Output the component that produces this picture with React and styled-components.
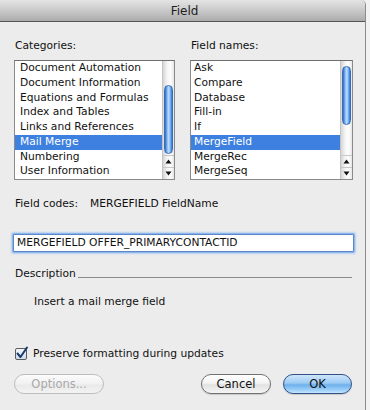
import React from 'react'
import styled, { createGlobalStyle, css } from 'styled-components'

const GlobalStyle = createGlobalStyle`
  html, body {
    margin: 0;
    padding: 0;
    background: #f2f2f2;
  }
  body {
    font-family: 'DejaVu Sans', 'Liberation Sans', sans-serif;
    font-size: 10.7px;
    color: #111;
  }
`

const Window = styled.div`
  width: 366px;
  height: 410px;
  background: #ececec;
  border-right: 1px solid #8c8c8c;
  border-top-right-radius: 5px;
  display: flex;
  flex-direction: column;
  box-sizing: border-box;
  overflow: hidden;
`

const TitleBar = styled.div`
  height: 21px;
  flex: none;
  display: flex;
  align-items: center;
  justify-content: center;
  background: linear-gradient(#e4e4e4, #c9c9c9 50%, #ababab);
  border-bottom: 1px solid #555;
  font-size: 12px;
  color: #1e1e1e;
  padding-left: 4px;
`

const Body = styled.div`
  padding: 17px 13px 0 14px;
  display: flex;
  flex-direction: column;
`

const ListsRow = styled.div`
  display: grid;
  grid-template-columns: 161px 163px;
  column-gap: 15px;
`

const Column = styled.div`
  display: flex;
  flex-direction: column;
`

const Label = styled.div`
  height: 16px;
  line-height: 14px;
  padding-left: 1px;
  margin-bottom: 5px;
`

const ListBox = styled.div`
  height: 120px;
  box-sizing: border-box;
  border: 1px solid #8a8a8a;
  border-top-color: #6f6f6f;
  background: #fff;
  display: flex;
`

const Items = styled.ul`
  list-style: none;
  margin: 0;
  padding: 0;
  flex: 1;
  overflow: hidden;
`

const Item = styled.li`
  height: 14.75px;
  line-height: 14.75px;
  padding-left: ${(p) => p.$indent}px;
  white-space: nowrap;
  ${(p) =>
    p.$selected &&
    css`
      background: #3d80df;
      color: #fff;
    `}
`

const ScrollBar = styled.div`
  width: 11px;
  flex: none;
  display: flex;
  flex-direction: column;
  background: linear-gradient(90deg, #d6d6d6, #f6f6f6 40%, #fdfdfd 70%, #e6e6e6);
  border-left: 1px solid #c4c4c4;
`

const Track = styled.div`
  flex: 1;
  position: relative;
`

const Thumb = styled.div`
  position: absolute;
  left: 1px;
  right: 1px;
  border-radius: 5px;
  background: linear-gradient(90deg, #2d69c6, #8fc0f5 35%, #bfe0ff 55%, #5d9ee8 85%, #2f6fd0);
  border: 1px solid #3a6cb8;
  box-sizing: border-box;
`

const ArrowButton = styled.div`
  height: 11px;
  border-top: 1px solid #c8c8c8;
  display: flex;
  align-items: center;
  justify-content: center;
`

const FieldCodesRow = styled.div`
  display: flex;
  gap: 12px;
  margin-top: 17px;
  padding-left: 1px;
  line-height: 14px;
`

const CodeInput = styled.div`
  margin-top: 23px;
  margin-left: -1px;
  width: 341px;
  height: 18px;
  box-sizing: border-box;
  background: #fff;
  border: 1px solid #5a88c8;
  box-shadow: 0 0 0 1px #8fb6ea, 0 0 2px 2px #b6d0f0;
  border-radius: 1px;
  padding-left: 3px;
  line-height: 16px;
  white-space: nowrap;
`

const SectionHeader = styled.div`
  margin-top: 15px;
  display: flex;
  align-items: center;
  gap: 2px;
  padding-left: 1px;
  line-height: 14px;
`

const Rule = styled.div`
  flex: 1;
  height: 1px;
  background: #8a8a8a;
  margin-top: 7px;
`

const DescriptionText = styled.div`
  margin-top: 14px;
  padding-left: 20px;
  line-height: 14px;
`

const CheckRow = styled.label`
  margin-top: 38px;
  display: flex;
  align-items: center;
  gap: 6px;
  padding-left: 1px;
  line-height: 14px;
`

const CheckBox = styled.span`
  width: 12px;
  height: 12px;
  box-sizing: border-box;
  border: 1px solid #5b5b5b;
  border-radius: 2px;
  background: linear-gradient(#f4f8fd, #cfdcec);
  position: relative;
  display: inline-block;
`

const CheckMark = styled.svg`
  position: absolute;
  left: -1px;
  top: -3px;
`

const ButtonRow = styled.div`
  margin-top: 13px;
  display: flex;
  align-items: center;
  gap: 12px;
`

const Button = styled.div`
  height: 20px;
  width: ${(p) => p.$w}px;
  box-sizing: border-box;
  border-radius: 10px;
  display: flex;
  align-items: center;
  justify-content: center;
  font-size: 11.5px;
  border: 1px solid #707070;
  background: linear-gradient(#ffffff, #f3f3f3 45%, #e2e2e2 55%, #f4f4f4);
  color: #111;
  box-shadow: 0 1px 1px rgba(0, 0, 0, 0.15);
  ${(p) =>
    p.$disabled &&
    css`
      color: #a8a8a8;
      border-color: #bdbdbd;
      background: linear-gradient(#fbfbfb, #f1f1f1 50%, #e9e9e9 55%, #f3f3f3);
      box-shadow: none;
    `}
  ${(p) =>
    p.$primary &&
    css`
      border-color: #33508c;
      background: linear-gradient(#cfe6fb, #9ccaf3 45%, #6eb0ec 55%, #a9d7fb 90%, #cbeaff);
    `}
`

const Spacer = styled.div`
  flex: 1;
`

const Arrow = ({ up }) => (
  <svg width="7" height="5" viewBox="0 0 7 5">
    <path d={up ? 'M3.5 0.5L6.5 4.5H0.5Z' : 'M0.5 0.5H6.5L3.5 4.5Z'} fill="#111" />
  </svg>
)

const List = ({ items, selected, thumbTop, thumbHeight, indent }) => (
  <ListBox>
    <Items>
      {items.map((item) => (
        <Item key={item} $selected={item === selected} $indent={indent}>
          {item}
        </Item>
      ))}
    </Items>
    <ScrollBar>
      <Track>
        <Thumb style={{ top: thumbTop, height: thumbHeight }} />
      </Track>
      <ArrowButton>
        <Arrow up />
      </ArrowButton>
      <ArrowButton>
        <Arrow />
      </ArrowButton>
    </ScrollBar>
  </ListBox>
)

const categories = [
  'Document Automation',
  'Document Information',
  'Equations and Formulas',
  'Index and Tables',
  'Links and References',
  'Mail Merge',
  'Numbering',
  'User Information',
]

const fieldNames = [
  'Ask',
  'Compare',
  'Database',
  'Fill-in',
  'If',
  'MergeField',
  'MergeRec',
  'MergeSeq',
]

export default function App() {
  return (
    <>
      <GlobalStyle />
      <Window>
        <TitleBar>Field</TitleBar>
        <Body>
          <ListsRow>
            <Column>
              <Label>Categories:</Label>
              <List items={categories} selected="Mail Merge" thumbTop={24} thumbHeight={69} indent={5} />
            </Column>
            <Column>
              <Label>Field names:</Label>
              <List items={fieldNames} selected="MergeField" thumbTop={5} thumbHeight={59} indent={3} />
            </Column>
          </ListsRow>

          <FieldCodesRow>
            <span>Field codes:</span>
            <span>MERGEFIELD FieldName</span>
          </FieldCodesRow>

          <CodeInput>MERGEFIELD OFFER_PRIMARYCONTACTID</CodeInput>

          <SectionHeader>
            <span>Description</span>
            <Rule />
          </SectionHeader>

          <DescriptionText>Insert a mail merge field</DescriptionText>

          <CheckRow>
            <CheckBox>
              <CheckMark width="14" height="14" viewBox="0 0 14 14">
                <path d="M2.5 7.5L5.5 11L12 1.5" fill="none" stroke="#1a3a6a" strokeWidth="2" strokeLinecap="round" strokeLinejoin="round" />
              </CheckMark>
            </CheckBox>
            <span>Preserve formatting during updates</span>
          </CheckRow>

          <ButtonRow>
            <Button $w={90} $disabled>Options...</Button>
            <Spacer />
            <Button $w={70}>Cancel</Button>
            <Button $w={69} $primary>OK</Button>
          </ButtonRow>
        </Body>
      </Window>
    </>
  )
}
